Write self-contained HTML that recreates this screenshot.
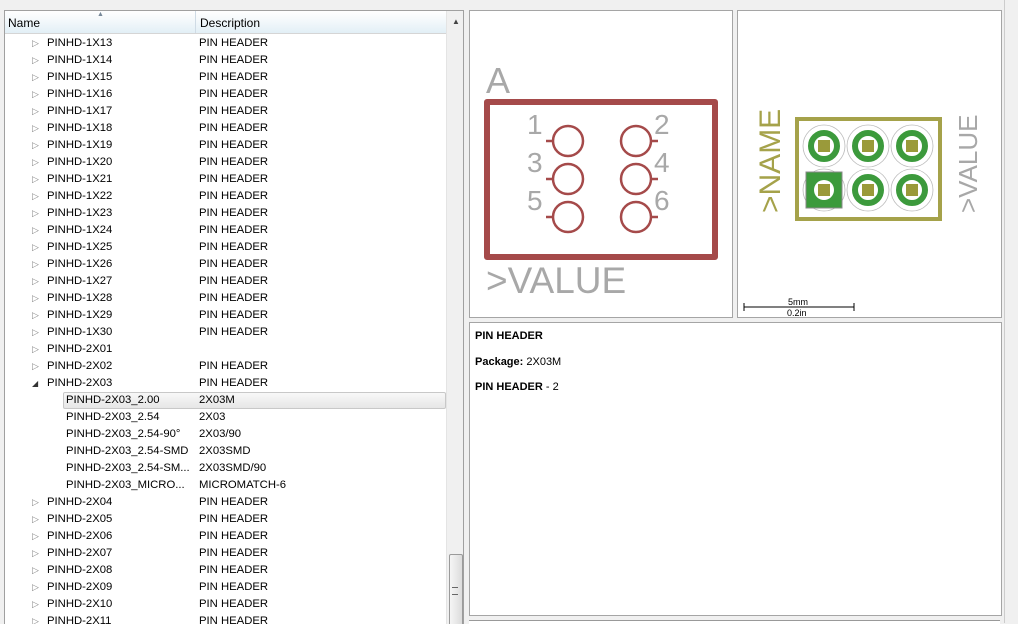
<!DOCTYPE html>
<html><head><style>
body{margin:0;width:1018px;height:623px;background:#f0f0f0;position:relative;overflow:hidden;font-family:"Liberation Sans",sans-serif;}
.abs{position:absolute;}
#tree{left:4px;top:10px;width:458px;height:613px;background:#fff;border:1px solid #a0a0a0;border-bottom:none;overflow:hidden;}
#hdr{position:absolute;left:0;top:0;width:441px;height:22px;background:linear-gradient(#fff,#f3f8fb 45%,#e2eff6);border-bottom:1px solid #d5d5d5;font-size:12px;}
#hdr div{position:absolute;top:5px;}
.row{position:absolute;height:17px;font-size:11.3px;line-height:17px;color:#000;width:441px;}
.row .n{position:absolute;}
.row .d{position:absolute;left:194px;}
.row .a{position:absolute;left:27px;top:0;color:#888;font-size:9px;}
#sb{position:absolute;left:441px;top:0;width:17px;height:613px;background:#f0f0f0;border-left:1px solid #e4e4e4;}
.panel{background:#fff;border:1px solid #a5a5a5;}
</style></head><body>
<div id="tree" class="abs">
<div id="hdr"><div style="left:3px">Name</div><div style="left:195px">Description</div>
<div style="position:absolute;left:190px;top:0;width:1px;height:22px;background:#cfdbe5"></div>
<div style="position:absolute;left:92px;top:0;font-size:7px;color:#789">▲</div></div>
<div id="rows"></div>
<div id="sb"><div style="position:absolute;left:5px;top:6px;font-size:8px;color:#444">▲</div>
<div style="position:absolute;left:2px;top:543px;width:12px;height:75px;background:linear-gradient(90deg,#f5f5f5,#dcdcdc);border:1px solid #9a9a9a;border-radius:2px"></div>
<div style="position:absolute;left:5px;top:576px;width:6px;height:6px;border-top:1px solid #666;border-bottom:1px solid #666"></div></div>
</div>
<script>
var rows=[];
for(var i=13;i<=30;i++)rows.push([1,'PINHD-1X'+i,'PIN HEADER','c']);
rows.push([1,'PINHD-2X01','','c']);rows.push([1,'PINHD-2X02','PIN HEADER','c']);rows.push([1,'PINHD-2X03','PIN HEADER','o']);
[['PINHD-2X03_2.00','2X03M'],['PINHD-2X03_2.54','2X03'],['PINHD-2X03_2.54-90°','2X03/90'],['PINHD-2X03_2.54-SMD','2X03SMD'],['PINHD-2X03_2.54-SM...','2X03SMD/90'],['PINHD-2X03_MICRO...','MICROMATCH-6']].forEach(function(r){rows.push([2,r[0],r[1],'']);});
for(var i=4;i<=11;i++)rows.push([1,'PINHD-2X'+(i<10?'0':'')+i,'PIN HEADER','c']);
var h='';
rows.forEach(function(r,k){var y=24+k*17;
var sel=(k==21)?'<div style="position:absolute;left:58px;top:0;width:381px;height:15px;border:1px solid #c8c8c8;border-radius:2px;background:linear-gradient(#f8f8f8,#e6e6e6)"></div>':'';
var ar=r[3]=='c'?'<span class="a">▷</span>':(r[3]=='o'?'<span class="a" style="color:#333;font-size:8px">◢</span>':'');
h+='<div class="row" style="top:'+y+'px">'+sel+ar+'<span class="n" style="left:'+(r[0]==1?42:61)+'px">'+r[1]+'</span><span class="d">'+r[2]+'</span></div>';});
document.getElementById('rows').innerHTML=h;
</script>

<div class="abs panel" style="left:469px;top:10px;width:262px;height:306px;">
<svg width="262" height="306" style="position:absolute;left:0;top:0" font-family="Liberation Sans" fill="#a8a8a8">
<text x="16" y="82" font-size="36">A</text>
<rect x="17" y="91" width="228" height="155" fill="none" stroke="#a54a4a" stroke-width="6" stroke-linejoin="round"/>
<g fill="none" stroke="#a54a4a" stroke-width="2.5">
<circle cx="98" cy="130" r="15"/><circle cx="98" cy="168" r="15"/><circle cx="98" cy="206" r="15"/>
<circle cx="166" cy="130" r="15"/><circle cx="166" cy="168" r="15"/><circle cx="166" cy="206" r="15"/>
<path d="M76 130H83M76 168H83M76 206H83M181 130H188M181 168H188M181 206H188"/></g>
<g font-size="28"><text x="57" y="123">1</text><text x="57" y="161">3</text><text x="57" y="199">5</text>
<text x="184" y="123">2</text><text x="184" y="161">4</text><text x="184" y="199">6</text></g>
<text x="16" y="282" font-size="37">&gt;VALUE</text>
</svg></div>

<div class="abs panel" style="left:737px;top:10px;width:263px;height:306px;">
<svg width="263" height="306" style="position:absolute;left:0;top:0" font-family="Liberation Sans">
<text transform="translate(42,202) rotate(-90)" font-size="30" fill="#a5a24a">&gt;NAME</text>
<text transform="translate(239,202) rotate(-90)" font-size="26" fill="#a8a8a8">&gt;VALUE</text>
<rect x="59" y="108" width="143" height="100" fill="none" stroke="#a5a24a" stroke-width="4"/>
<g fill="none" stroke="#bbb" stroke-width="0.8">
<circle cx="86" cy="135" r="21"/><circle cx="130" cy="135" r="21"/><circle cx="174" cy="135" r="21"/>
<circle cx="86" cy="179" r="21"/><circle cx="130" cy="179" r="21"/><circle cx="174" cy="179" r="21"/></g>
<rect x="68" y="161" width="36" height="36" fill="#3c9a3c" stroke="#888" stroke-width="1"/>
<g fill="none" stroke="#3c9a3c" stroke-width="6">
<circle cx="86" cy="135" r="13"/><circle cx="130" cy="135" r="13"/><circle cx="174" cy="135" r="13"/>
<circle cx="130" cy="179" r="13"/><circle cx="174" cy="179" r="13"/></g>
<circle cx="86" cy="179" r="10" fill="#fff"/>
<g fill="#9a9a3a"><rect x="80" y="129" width="12" height="12"/><rect x="124" y="129" width="12" height="12"/><rect x="168" y="129" width="12" height="12"/>
<rect x="80" y="173" width="12" height="12"/><rect x="124" y="173" width="12" height="12"/><rect x="168" y="173" width="12" height="12"/></g>
<path d="M6 292V300M6 296H116M116 292V300" stroke="#000" stroke-width="1" fill="none"/>
<text x="50" y="294" font-size="9">5mm</text><text x="49" y="305" font-size="9">0.2in</text>
</svg></div>

<div class="abs panel" style="left:469px;top:322px;width:531px;height:292px;font-size:11px;">
<div class="abs" style="left:5px;top:7px;font-weight:bold">PIN HEADER</div>
<div class="abs" style="left:5px;top:33px"><b>Package:</b> 2X03M</div>
<div class="abs" style="left:5px;top:58px"><b>PIN HEADER</b> - 2</div>
</div>
<div class="abs" style="left:469px;top:620px;width:531px;height:3px;border-top:1px solid #999;background:#fff"></div>
<div class="abs" style="left:1004px;top:0;width:1px;height:623px;background:#ccc"></div>
</body></html>
